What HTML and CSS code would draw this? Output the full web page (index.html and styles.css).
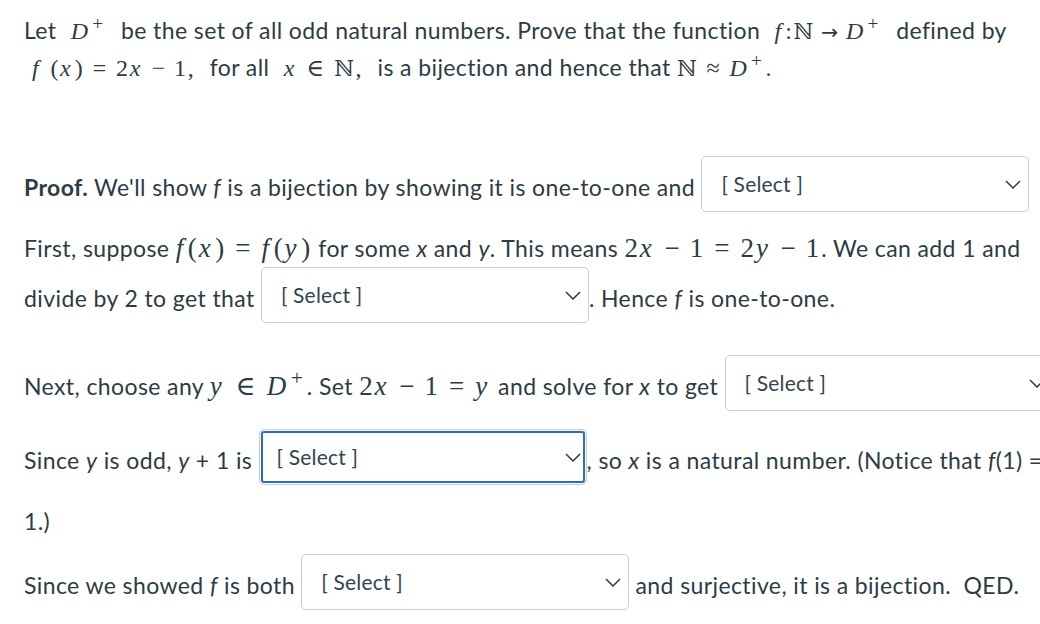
FILE: index.html
```html
<!DOCTYPE html>
<html lang="en">
<head>
  <meta charset="UTF-8" />
  <title>Quiz • Bijection proof</title>
  <meta name="viewport" content="width=device-width, initial-scale=1.0" />
  <link rel="stylesheet" href="styles.css">
</head>
<body>
  <div class="page">

    <!-- Enunciado -->
    <p class="question">
      Let <span class="qm"><i>D</i><sup>+</sup></span> be the set of all odd natural numbers. Prove that the function
      <span class="qm"><i>f</i>:<span class="bb">ℕ</span><span class="rel arrow">→</span><i>D</i><sup>+</sup></span> defined by
      <span class="qm"><i>f</i> (<i>x</i>)<span class="rel">=</span>2<i>x</i><span class="op">−</span>1,</span> for all
      <span class="qm"><i>x</i><span class="rel">∈</span><span class="bb">ℕ</span>,</span> is a bijection and hence that
      <span class="qm nospace"><span class="bb">ℕ</span><span class="rel">≈</span><i>D</i><sup>+</sup>.</span>
    </p>

    <!-- Respostas -->
    <p class="answer">
      <b>Proof.</b> We'll show <em>f</em> is a bijection by showing it is one-to-one and
      <span class="select"><span class="select-label">[ Select ]</span><svg class="chevron" viewBox="0 0 16 9"><polyline points="1,1 8,8 15,1"/></svg></span>
    </p>

    <p class="answer">
      First, suppose <span class="m"><i>f</i>(<i>x</i>)<span class="rel">=</span><i>f</i>(<i>y</i>)</span> for some <em>x</em> and <em>y</em>. This means
      <span class="m">2<i>x</i><span class="op">−</span>1<span class="rel">=</span>2<i>y</i><span class="op">−</span>1</span>. We can add 1 and divide by 2 to get that
      <span class="select"><span class="select-label">[ Select ]</span><svg class="chevron" viewBox="0 0 16 9"><polyline points="1,1 8,8 15,1"/></svg></span>. Hence <em>f</em> is one-to-one.
    </p>

    <p class="answer spaced">
      Next, choose any <span class="m"><i>y</i><span class="rel">∈</span><i>D</i><sup>+</sup></span>. Set
      <span class="m">2<i>x</i><span class="op">−</span>1<span class="rel">=</span><i>y</i></span> and solve for <em>x</em> to get
      <span class="select"><span class="select-label">[ Select ]</span><svg class="chevron" viewBox="0 0 16 9"><polyline points="1,1 8,8 15,1"/></svg></span>
    </p>

    <p class="answer">
      Since <em>y</em> is odd, <em>y</em> + 1 is
      <span class="select focused"><span class="select-label">[ Select ]</span><svg class="chevron" viewBox="0 0 16 9"><polyline points="1,1 8,8 15,1"/></svg></span>, so <em>x</em> is a natural number. (Notice that <em>f</em>(1) = 1.)
    </p>

    <p class="answer spaced">
      Since we showed <em>f</em> is both
      <span class="select"><span class="select-label">[ Select ]</span><svg class="chevron" viewBox="0 0 16 9"><polyline points="1,1 8,8 15,1"/></svg></span> and surjective, it is a bijection.&nbsp; QED.
    </p>

  </div>
</body>
</html>
```

FILE: styles.css
```css
/* Reset básico */
* { box-sizing: border-box; margin: 0; padding: 0; }

html, body {
  overflow: hidden;
}

body {
  background: #ffffff;
  color: #2d3b45;
  font-family: Lato, "Noto Sans", sans-serif;
  font-size: 23px;
  letter-spacing: 0.4px;
}

.page {
  width: 1031px;
  padding-left: 24px;
  box-sizing: content-box;
}

p {
  line-height: 37px;
}

/* Enunciado */
.question {
  padding-top: 12px;
  margin-bottom: 70px;
}

.qm, .m {
  font-family: "Liberation Serif", "DejaVu Serif", serif;
  white-space: nowrap;
  line-height: 1;
  letter-spacing: 0.07em;
}
.qm {
  font-size: 24px;
  margin: 0 8px;
}
.qm.nospace { margin-left: 0; }
.m { font-size: 27px; }

.qm i, .m i {
  font-style: italic;
  margin-right: 0.1em;
}

.bb { font-family: "DejaVu Serif", serif; font-size: 0.9em; }

sup {
  font-size: 0.8em;
  line-height: 0;
  vertical-align: 0.45em;
  margin-left: 0;
  margin-right: 2px;
}

.op  { margin: 0 0.3em; }
.rel { margin: 0 0.34em; }
.rel.arrow {
  font-family: "DejaVu Sans", sans-serif;
  font-size: 0.85em;
  margin: 0 0.3em;
}

/* Respostas */
.answer.spaced { margin-top: 14px; }

em { font-style: italic; }
b  { font-weight: 700; }

/* o texto do select fica um pouco acima da linha de base do parágrafo */
.select {
  display: inline-flex;
  align-items: center;
  width: 328px;
  height: 56px;
  padding: 0 7px 0 19px;
  margin-bottom: 18px;
  vertical-align: 4px;
  background: #ffffff;
  border: 1px solid #c7cdd1;
  border-radius: 5px;
  color: #34444f;
  font-size: 21px;
  letter-spacing: 0.2px;
  line-height: 24px;
}

.select-label { white-space: nowrap; }

.chevron {
  width: 16px;
  height: 9px;
  margin-left: auto;
  fill: none;
  stroke: #2d3b45;
  stroke-width: 1.5;
}

.select.focused {
  padding-left: 17px;
  padding-right: 5px;
  box-shadow: inset 0 0 0 1px #ffffff, inset 0 0 0 3px #2c6cc0;
}
```
